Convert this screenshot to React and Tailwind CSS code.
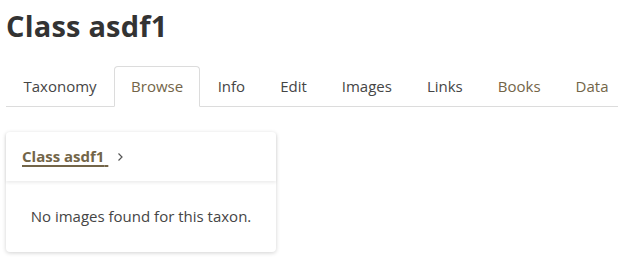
import React from "react";

const tabs = [
  { label: "Taxonomy", cls: "text-[#454545]" },
  { label: "Browse", cls: "text-[#736548]", active: true },
  { label: "Info", cls: "text-[#454545]" },
  { label: "Edit", cls: "text-[#454545]" },
  { label: "Images", cls: "text-[#454545]" },
  { label: "Links", cls: "text-[#454545]" },
  { label: "Books", cls: "text-[#736548]" },
  { label: "Data", cls: "text-[#736548]" },
];

export default function App() {
  return (
    <div className="w-[618px] h-[276px] bg-white pl-[6px] pt-[6px]" style={{ fontFamily: '"Open Sans", "Noto Sans", sans-serif' }}>
      <h1 className="text-[29px] leading-[40px] font-bold text-[#333] tracking-[0.2px]">Class asdf1</h1>
      <div className="mt-[20px] flex border-b border-[#dcdcdc] h-[41px]">
        {tabs.map((t) =>
          t.active ? (
            <div key={t.label} className={`px-[16px] h-[41px] -mb-px flex items-center border border-[#dcdcdc] border-b-white rounded-t-[4px] bg-white text-[15px] ${t.cls}`}>
              {t.label}
            </div>
          ) : (
            <div key={t.label} className={`px-[17.5px] h-[40px] flex items-center text-[15px] ${t.cls}`}>
              {t.label}
            </div>
          )
        )}
      </div>
      <div className="mt-[25px] w-[270px] rounded-[4px] bg-white shadow-[0_1px_4px_rgba(0,0,0,0.18)]">
        <div className="h-[49px] px-[16px] flex items-center gap-[8px] shadow-[0_2px_3px_rgba(0,0,0,0.07)]">
          <span className="text-[15px] font-bold underline underline-offset-[3px] decoration-[1.5px] text-[#736548]">Class asdf1{"\u00a0"}</span>
          <svg width="8" height="10" viewBox="0 0 8 10" className="mt-[1px]">
            <path d="M2.5 1.5 L6 5 L2.5 8.5" fill="none" stroke="#555" strokeWidth="1.2" />
          </svg>
        </div>
        <div className="h-[71px] flex items-center justify-center text-[15px] text-[#454545]">
          No images found for this taxon.
        </div>
      </div>
    </div>
  );
}
